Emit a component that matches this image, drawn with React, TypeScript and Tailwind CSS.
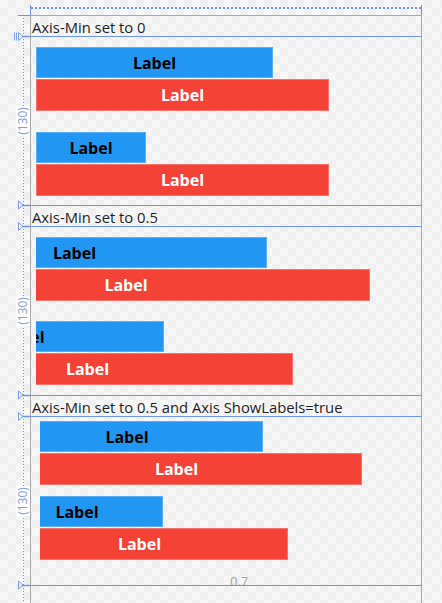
type Bar = { w: number; blue: boolean };

const sections = [
  {
    title: "Axis-Min set to 0",
    chart: "pt-[10px] pl-[5px] gap-[21px]",
    shift: "ml-0",
    groups: [
      [
        { w: 237, blue: true },
        { w: 293, blue: false },
      ],
      [
        { w: 110, blue: true },
        { w: 293, blue: false },
      ],
    ],
  },
  {
    title: "Axis-Min set to 0.5",
    chart: "pt-[10px] pl-[5px] gap-[20px]",
    shift: "ml-[-154px]",
    groups: [
      [
        { w: 385, blue: true },
        { w: 488, blue: false },
      ],
      [
        { w: 282, blue: true },
        { w: 411, blue: false },
      ],
    ],
  },
  {
    title: "Axis-Min set to 0.5 and Axis ShowLabels=true",
    chart: "pt-[4px] pl-[9px] gap-[11px]",
    shift: "ml-[-49px]",
    groups: [
      [
        { w: 272, blue: true },
        { w: 371, blue: false },
      ],
      [
        { w: 172, blue: true },
        { w: 297, blue: false },
      ],
    ],
  },
];

const LINE = "#6d95e8";

function BarRow({ bar, shift }: { bar: Bar; shift: string }) {
  return (
    <div
      className={`${shift} shrink-0 flex items-center justify-center border border-white/25 text-[16px] font-bold ${
        bar.blue ? "h-[31px] bg-[#2196f3] text-black" : "h-[32px] bg-[#f44336] text-white"
      }`}
      style={{ width: bar.w }}
    >
      Label
    </div>
  );
}

// designer adorners: dotted ruler, pin triangles and the tick marks
function Gutter({ first, last }: { first?: boolean; last?: boolean }) {
  const h = last ? 18 : 190;
  return (
    <svg className="absolute inset-0 overflow-visible" width="30" height={h} viewBox={`0 0 30 ${h}`}>
      <line x1="23.5" y1={first ? 3 : 0} x2="23.5" y2={h} stroke={LINE} strokeWidth="1" strokeDasharray="1 2" />
      {first ? (
        <line x1="18" y1="0.5" x2="30" y2="0.5" stroke={LINE} strokeWidth="1" />
      ) : (
        <g>
          <polygon points="18.5,-4 18.5,4 23,0" fill="none" stroke="#7a9fe6" strokeWidth="1" />
          <line x1="22" y1="0.5" x2="30" y2="0.5" stroke={LINE} strokeWidth="1.5" />
        </g>
      )}
      {!last && (
        <g>
          {first && (
            <g stroke="#7a9fe6" strokeWidth="1">
              <line x1="14.5" y1="17.5" x2="14.5" y2="25.5" />
              <line x1="16.5" y1="17.5" x2="16.5" y2="25.5" />
            </g>
          )}
          <polygon points="18.5,17.5 18.5,25.5 23,21.5" fill="none" stroke="#7a9fe6" strokeWidth="1" />
          <line x1="22" y1="21.5" x2="30" y2="21.5" stroke={LINE} strokeWidth="1.5" />
        </g>
      )}
    </svg>
  );
}

export default function App() {
  return (
    <div className="w-[442px] h-[603px] overflow-hidden flex flex-col bg-[repeating-conic-gradient(#efefef_0%_25%,#f7f7f7_0%_50%)] bg-[length:16px_16px] font-['Open_Sans','Noto_Sans',sans-serif]">
      <div className="flex h-[15px] shrink-0">
        <div className="w-[30px] shrink-0" />
        <div className="w-[392px] pt-[7px] border-l border-r border-[#6d95e8] mt-[5px] h-[10px]">
          <div className="mt-[-5px] border-t-2 border-dotted border-[#6d95e8]" />
        </div>
      </div>

      {sections.map((s, i) => (
        <div key={s.title} className="flex h-[190px] shrink-0">
          <div className="relative w-[30px] shrink-0 flex flex-col">
            <Gutter first={i === 0} />
            <div className="h-[22px] shrink-0" />
            <div className="relative flex-1 flex items-center justify-end">
              <div className="w-[14px] h-[30px] bg-white flex items-center justify-center">
                <span className="-rotate-90 whitespace-nowrap text-[12px] leading-none text-[#7f9de0]">(130)</span>
              </div>
            </div>
          </div>
          <div
            className={`w-[392px] shrink-0 flex flex-col border-l border-r border-[#a8a8a8] border-t ${
              i === 0 ? "border-t-[#a8a8a8]" : "border-t-[#6d95e8]"
            }`}
          >
            <div className="h-[20px] shrink-0 pl-[1px] pt-[1px] text-[14.8px] leading-[20px] text-[#1e1e1e] whitespace-nowrap">
              {s.title}
            </div>
            <div className={`flex-1 overflow-hidden flex flex-col border-t border-[#6d95e8] ${s.chart}`}>
              {s.groups.map((g, gi) => (
                <div key={gi} className="overflow-hidden flex flex-col gap-[1px] shrink-0">
                  {g.map((b, bi) => (
                    <BarRow key={bi} bar={b} shift={s.shift} />
                  ))}
                </div>
              ))}
              {i === 2 && (
                <span className="mt-auto mb-[-6px] pl-[190px] text-[13px] leading-[20px] text-[#a3a3a3]">0.7</span>
              )}
            </div>
          </div>
        </div>
      ))}

      <div className="flex flex-1">
        <div className="relative w-[30px] shrink-0">
          <Gutter last />
        </div>
        <div className="w-[392px] shrink-0 border-l border-r border-t border-[#a8a8a8] border-t-[#6d95e8]" />
      </div>
    </div>
  );
}
